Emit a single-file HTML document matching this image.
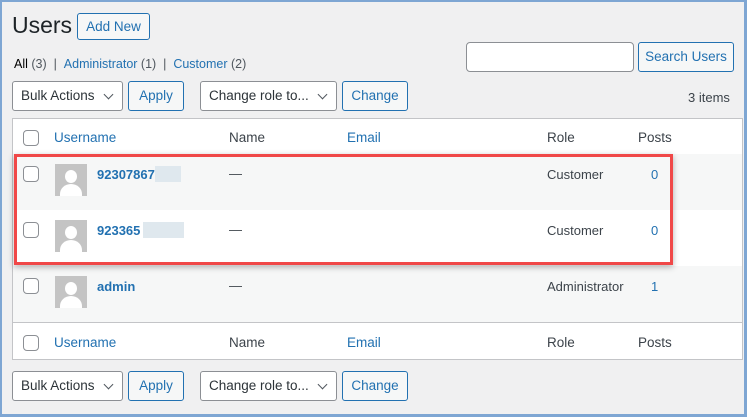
<!DOCTYPE html>
<html><head><style>
*{box-sizing:border-box;margin:0;padding:0}
body{width:747px;height:417px;background:#f0f0f1;font-family:"Liberation Sans",sans-serif;font-size:13px;color:#3c434a;position:relative;overflow:hidden;border:2px solid #7ea6d3;border-right-width:3px;border-bottom-width:3px}
.a{position:absolute}
.btn{position:absolute;height:30px;border:1px solid #2271b1;border-radius:3px;color:#2271b1;background:#f6f7f7;font-size:13.5px;line-height:28px;text-align:center}
.sel{position:absolute;height:30px;border:1px solid #8c8f94;border-radius:3px;background:#fff;font-size:13.5px;line-height:28px;padding-left:8px;color:#2c3338}
.sel:after{content:"";position:absolute;right:10px;top:9px;width:6px;height:6px;border-right:1.5px solid #50575e;border-bottom:1.5px solid #50575e;transform:rotate(45deg)}
.cb{position:absolute;width:16px;height:16px;border:1px solid #8c8f94;border-radius:4px;background:#fff;left:23px}
.lnk{color:#2271b1}
.av{position:absolute;left:55px;width:32px;height:32px;background:#c4c4c4;overflow:hidden}
.av:before{content:"";position:absolute;left:10px;top:6px;width:12px;height:13px;border-radius:50%;background:#fff}
.av:after{content:"";position:absolute;left:5px;top:20px;width:22px;height:20px;border-radius:50% 50% 0 0;background:#fff}
</style></head><body>
<div class="a" style="left:10px;top:10px;font-size:23px;color:#1d2327">Users</div>
<div class="btn" style="left:75px;top:11px;width:73px;height:27px;line-height:25px">Add New</div>
<div class="a" style="left:12px;top:55px;font-size:12.5px;color:#50575e"><b style="color:#000;font-weight:normal">All</b> (3) &nbsp;| &nbsp;<span class="lnk">Administrator</span> (1) &nbsp;| &nbsp;<span class="lnk">Customer</span> (2)</div>
<div class="a" style="left:464px;top:40px;width:168px;height:30px;border:1px solid #8c8f94;border-radius:4px;background:#fff"></div>
<div class="btn" style="left:636px;top:40px;width:96px">Search Users</div>
<div class="sel" style="left:10px;top:79px;width:111px">Bulk Actions</div>
<div class="btn" style="left:126px;top:79px;width:56px">Apply</div>
<div class="sel" style="left:198px;top:79px;width:137px">Change role to...</div>
<div class="btn" style="left:340px;top:79px;width:66px">Change</div>
<div class="a" style="left:686px;top:88px">3 items</div>
<div class="a" style="left:10px;top:116px;width:731px;height:242px;background:#fff;border:1px solid #c3c4c7"></div>
<div class="a" style="left:11px;top:152px;width:729px;height:1px;background:#c3c4c7"></div>
<div class="a" style="left:11px;top:152px;width:729px;height:56px;background:#f6f7f7"></div>
<div class="a" style="left:11px;top:264px;width:729px;height:56px;background:#f6f7f7"></div>
<div class="a" style="left:11px;top:320px;width:729px;height:1px;background:#c3c4c7"></div>
<div class="cb" style="top:128px;left:21px"></div>
<div class="a lnk" style="left:52px;top:128px;font-size:13.5px">Username</div>
<div class="a" style="left:227px;top:128px;font-size:13.5px">Name</div>
<div class="a lnk" style="left:345px;top:128px;font-size:13.5px">Email</div>
<div class="a" style="left:545px;top:128px;font-size:13.5px">Role</div>
<div class="a" style="left:636px;top:128px;font-size:13.5px">Posts</div>

<div class="cb" style="top:164px;left:21px"></div><div class="av" style="left:53px;top:162px"></div>
<div class="a lnk" style="left:95px;top:165px;font-weight:bold">92307867</div><div class="a" style="left:153px;top:164px;width:26px;height:16px;background:#dfe8ee"></div>
<div class="a" style="left:227px;top:164px">—</div><div class="a" style="left:545px;top:165px">Customer</div><div class="a lnk" style="left:649px;top:165px">0</div>

<div class="cb" style="top:220px;left:21px"></div><div class="av" style="left:53px;top:218px"></div>
<div class="a lnk" style="left:95px;top:221px;font-weight:bold">923365</div><div class="a" style="left:141px;top:220px;width:41px;height:16px;background:#dfe8ee"></div>
<div class="a" style="left:227px;top:220px">—</div><div class="a" style="left:545px;top:221px">Customer</div><div class="a lnk" style="left:649px;top:221px">0</div>

<div class="cb" style="top:276px;left:21px"></div><div class="av" style="left:53px;top:274px"></div>
<div class="a lnk" style="left:95px;top:277px;font-weight:bold">admin</div>
<div class="a" style="left:227px;top:276px">—</div><div class="a" style="left:545px;top:277px">Administrator</div><div class="a lnk" style="left:649px;top:277px">1</div>

<div class="a" style="left:12px;top:152px;width:659px;height:111px;border:3px solid #f04848;box-shadow:0 2px 6px rgba(0,0,0,.3)"></div>

<div class="cb" style="top:333px;left:21px"></div>
<div class="a lnk" style="left:52px;top:333px;font-size:13.5px">Username</div>
<div class="a" style="left:227px;top:333px;font-size:13.5px">Name</div>
<div class="a lnk" style="left:345px;top:333px;font-size:13.5px">Email</div>
<div class="a" style="left:545px;top:333px;font-size:13.5px">Role</div>
<div class="a" style="left:636px;top:333px;font-size:13.5px">Posts</div>

<div class="sel" style="left:10px;top:369px;width:111px">Bulk Actions</div>
<div class="btn" style="left:126px;top:369px;width:56px">Apply</div>
<div class="sel" style="left:198px;top:369px;width:137px">Change role to...</div>
<div class="btn" style="left:340px;top:369px;width:66px">Change</div>
</body></html>
